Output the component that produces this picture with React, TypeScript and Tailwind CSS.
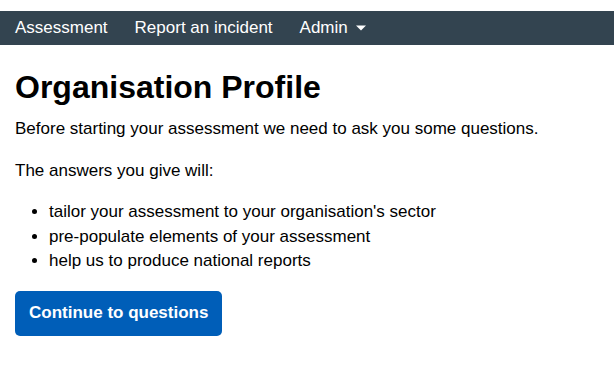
export default function App() {
  const items = [
    "tailor your assessment to your organisation's sector",
    "pre-populate elements of your assessment",
    "help us to produce national reports",
  ];

  return (
    <div className="min-h-[367px] bg-white font-['Liberation_Sans',Arial,sans-serif] text-black">
      <div className="h-[11px]"></div>
      {/* Top navigation */}
      <nav className="flex h-[34px] items-center bg-[#334450] px-[15px] text-[17px] text-white">
        <a className="mr-[27px]">Assessment</a>
        <a className="mr-[27px]">Report an incident</a>
        <a className="flex items-center">
          Admin
          <svg className="ml-[8px]" width="10" height="6" viewBox="0 0 10 6">
            <path d="M0 0.5h10L5 5.5z" fill="white" />
          </svg>
        </a>
      </nav>

      <main className="px-[15px] text-[17px]">
        <h1 className="mt-[22px] text-[32px] font-bold leading-[40px]">Organisation Profile</h1>
        <p className="mt-[10px] leading-[24px]">
          Before starting your assessment we need to ask you some questions.
        </p>
        <p className="mt-[18px] leading-[24px]">The answers you give will:</p>
        <ul className="mt-[17px] list-disc pl-[34px]">
          {items.map((item) => (
            <li key={item} className="leading-[24.5px]">
              {item}
            </li>
          ))}
        </ul>
        <button className="mt-[17px] h-[45px] rounded-[5px] bg-[#005eb8] px-[14px] text-[17px] font-bold text-white">
          Continue to questions
        </button>
      </main>
    </div>
  );
}
